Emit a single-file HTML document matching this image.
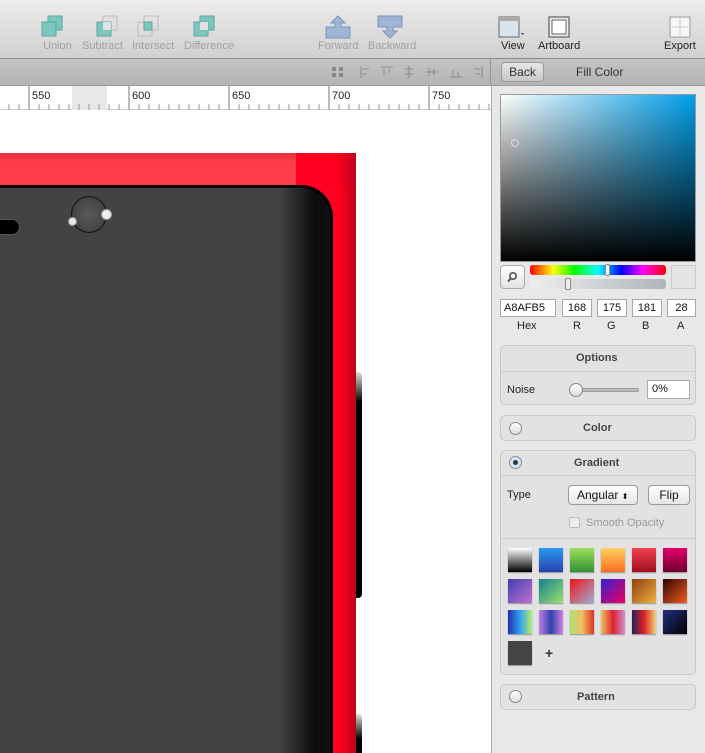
<!DOCTYPE html>
<html><head><meta charset="utf-8"><style>
*{margin:0;padding:0;box-sizing:border-box}
html,body{width:705px;height:753px;overflow:hidden}
body{position:relative;font-family:"Liberation Sans",sans-serif;background:#fff}
#w{position:absolute;left:0;top:0;width:705px;height:753px;overflow:hidden}
.a{position:absolute}
.tb{left:0;top:0;width:705px;height:59px;background:linear-gradient(#ececec,#d0d0d0);border-bottom:1px solid #8a8a8a}
.lbl{font-size:11px;color:#a0a0a0;top:40px}
.lbl2{font-size:11px;color:#222;top:40px}
.bar2{left:0;top:59px;width:705px;height:27px;background:linear-gradient(#c4c4c4,#b4b4b4);border-bottom:1px solid #999}
.ruler{left:0;top:86px;width:491px;height:24px;background:#fff;border-bottom:1px solid #ccc;font-size:11px;color:#222}
.panel{left:491px;top:86px;width:214px;height:667px;background:#e8e8e8;border-left:1px solid #aaa}
.box{background:#e2e2e2;border:1px solid #c8c8c8;border-radius:5px}
.in{background:#fff;border:1px solid #aaa;font-size:11px;color:#111;text-align:center;line-height:16px}
.sw{width:24px;height:24px;box-shadow:0 1px 1px rgba(0,0,0,.35)}
.rad{width:13px;height:13px;border-radius:50%;border:1px solid #888;background:linear-gradient(#fff,#ddd)}
.t{font-size:11px;color:#222}
.tb2{font-size:11px;font-weight:bold;color:#444}
</style></head><body><div id="w">
<div class="a tb"></div>
<svg class="a" style="left:40px;top:14px" width="200" height="28">
<rect x="8" y="2" width="14" height="14" fill="#7cc6bd" stroke="#5aa79e"/><rect x="2" y="8" width="14" height="14" fill="#7cc6bd" stroke="#5aa79e"/>
<rect x="63" y="2" width="14" height="14" fill="#e0e0e0" stroke="#bbb"/><rect x="57" y="8" width="14" height="14" fill="#7cc6bd" stroke="#5aa79e"/><rect x="63" y="8" width="8" height="8" fill="#e0e0e0"/>
<rect x="104" y="2" width="14" height="14" fill="none" stroke="#bbb"/><rect x="98" y="8" width="14" height="14" fill="none" stroke="#bbb"/><rect x="104" y="8" width="8" height="8" fill="#7cc6bd" stroke="#5aa79e"/>
<rect x="160" y="2" width="14" height="14" fill="#7cc6bd" stroke="#5aa79e"/><rect x="154" y="8" width="14" height="14" fill="#7cc6bd" stroke="#5aa79e"/><rect x="160" y="8" width="8" height="8" fill="#e0e0e0"/>
</svg>
<div class="a lbl" style="left:43px">Union</div>
<div class="a lbl" style="left:82px">Subtract</div>
<div class="a lbl" style="left:132px">Intersect</div>
<div class="a lbl" style="left:184px">Difference</div>
<svg class="a" style="left:322px;top:14px" width="90" height="26">
<path d="M16 2 L9 9 H13 V13 H4 V24 H28 V13 H19 V9 H23 Z" fill="#9fb5d6" stroke="#7a92b8"/>
<path d="M56 2 H80 V13 H71 V17 H75 L68 24 L61 17 H65 V13 H56 Z" fill="#9fb5d6" stroke="#7a92b8"/>
</svg>
<div class="a lbl" style="left:318px">Forward</div>
<div class="a lbl" style="left:368px">Backward</div>
<svg class="a" style="left:498px;top:15px" width="200" height="26">
<rect x="1" y="2" width="20" height="20" fill="#d8e4f0" stroke="#666"/><rect x="1" y="2" width="20" height="4" fill="#aaa"/><path d="M23 18 l3 0 l-1.5 2z" fill="#333"/>
<rect x="51" y="2" width="20" height="20" fill="#eee" stroke="#444"/><rect x="54" y="5" width="14" height="14" fill="#fff" stroke="#666"/>
<rect x="172" y="2" width="20" height="20" fill="#f6f6f6" stroke="#999"/><path d="M182 2 V22 M172 12 H192" stroke="#ccc"/>
</svg>
<div class="a lbl2" style="left:501px">View</div>
<div class="a lbl2" style="left:538px">Artboard</div>
<div class="a lbl2" style="left:664px">Export</div>
<div class="a bar2"></div>
<svg class="a" style="left:330px;top:64px" width="16" height="16" fill="#888"><rect x="2" y="3" width="4" height="4"/><rect x="9" y="3" width="4" height="4"/><rect x="2" y="9" width="4" height="4"/><rect x="9" y="9" width="4" height="4"/></svg>
<svg class="a" style="left:358px;top:64px" width="130" height="16" stroke="#8a8a8a" fill="#8a8a8a">
<path d="M3 2V14M5 5h6M5 10h4"/><path d="M23 3h12M26 5v6M31 5v4"/><path d="M51 2v12M47 5h8M47 10h8"/><path d="M68 8h12M71 4v8M76 5v6"/><path d="M92 13h12M95 6v6M100 8v4"/><path d="M124 2v12M116 5h6M118 10h4"/>
</svg>
<div class="a" style="left:490px;top:59px;width:1px;height:27px;background:#999"></div>
<div class="a" style="left:501px;top:62px;width:43px;height:20px;border:1px solid #999;border-radius:4px;background:linear-gradient(#e6e6e6,#c8c8c8);font-size:12px;color:#333;text-align:center;line-height:18px">Back</div>
<div class="a" style="left:576px;top:65px;font-size:12px;color:#333">Fill Color</div>
<div class="a ruler">
<div class="a" style="left:72px;top:0;width:35px;height:24px;background:#e8e8e8"></div>
<svg class="a" style="left:0;top:0" width="491" height="24">
<g stroke="#999">
<path d="M9 18v6M19 18v6M39 18v6M49 18v6M59 18v6M69 18v6M79 18v6M89 18v6M99 18v6M109 18v6M119 18v6M139 18v6M149 18v6M159 18v6M169 18v6M179 18v6M189 18v6M199 18v6M209 18v6M219 18v6M239 18v6M249 18v6M259 18v6M269 18v6M279 18v6M289 18v6M299 18v6M309 18v6M319 18v6M339 18v6M349 18v6M359 18v6M369 18v6M379 18v6M389 18v6M399 18v6M409 18v6M419 18v6M439 18v6M449 18v6M459 18v6M469 18v6M479 18v6M489 18v6"/>
<path d="M29 0v24M129 0v24M229 0v24M329 0v24M429 0v24" stroke="#777"/>
</g>
<g font-size="11" fill="#222" font-family="Liberation Sans"><text x="32" y="13">550</text><text x="132" y="13">600</text><text x="232" y="13">650</text><text x="332" y="13">700</text><text x="432" y="13">750</text></g>
</svg></div>
<div class="a" style="left:0;top:153px;width:356px;height:600px;background:linear-gradient(90deg,#ff0020 0,#ff0020 340px,#c00018 356px)"></div>
<div class="a" style="left:0;top:153px;width:296px;height:32px;background:linear-gradient(#e8303e,#ff3c4c 30%,#ff3c4c)"></div>
<div class="a" style="left:296px;top:153px;width:60px;height:32px;background:linear-gradient(90deg,#ff0020,#ff0020 40px,#c00018)"></div>
<div class="a" style="left:0;top:185px;width:333px;height:568px;border:3px solid #000;border-left:none;border-bottom:none;border-radius:0 32px 0 0;background:linear-gradient(90deg,#434343 0,#434343 280px,#2a2a2a 295px,#0c0c0c 315px,#111 330px)"></div>
<div class="a" style="left:0;top:219px;width:20px;height:16px;border-radius:0 8px 8px 0;background:#000;border:1px solid #555;border-left:none"></div>
<div class="a" style="left:71px;top:196px;width:36px;height:37px;border-radius:50%;background:radial-gradient(#5a5a5a,#3a3a3a);border:1px solid #111"></div>
<div class="a" style="left:68px;top:217px;width:9px;height:9px;border-radius:50%;background:#e8e8e8;border:1px solid #999"></div>
<div class="a" style="left:101px;top:209px;width:11px;height:11px;border-radius:50%;background:#eee;border:1px solid #999"></div>
<div class="a" style="left:356px;top:372px;width:6px;height:226px;border-radius:0 4px 4px 0;background:linear-gradient(#ddd,#000 30px,#000)"></div>
<div class="a" style="left:356px;top:714px;width:6px;height:39px;border-radius:0 4px 0 0;background:linear-gradient(#ddd,#000 25px)"></div>
<div class="a panel"></div>
<div class="a" style="left:500px;top:94px;width:196px;height:168px;border:1px solid #999;background:linear-gradient(transparent,#000),linear-gradient(90deg,#fff,#009ee8)"></div>
<div class="a" style="left:511px;top:139px;width:8px;height:8px;border-radius:50%;border:1.5px solid #ddd"></div>
<div class="a" style="left:500px;top:265px;width:25px;height:24px;border:1px solid #aaa;border-radius:4px;background:linear-gradient(#fff,#e4e4e4)"></div>
<svg class="a" style="left:506px;top:270px" width="14" height="14"><circle cx="7" cy="6" r="3.2" fill="none" stroke="#555" stroke-width="1.6"/><path d="M4.8 8.5 L2 11.5" stroke="#555" stroke-width="2"/></svg>
<div class="a" style="left:530px;top:265px;width:136px;height:10px;border-radius:3px;background:linear-gradient(90deg,#f00,#ff0 17%,#0f0 33%,#0ff 50%,#00f 67%,#f0f 83%,#f00)"></div>
<div class="a" style="left:605px;top:264px;width:5px;height:12px;background:#fff;border:1px solid #888;border-radius:2px"></div>
<div class="a" style="left:530px;top:279px;width:136px;height:10px;border-radius:3px;background:linear-gradient(90deg,#eee,#b0b5bb)"></div>
<div class="a" style="left:565px;top:278px;width:6px;height:12px;background:#eee;border:1px solid #888;border-radius:2px"></div>
<div class="a" style="left:671px;top:265px;width:25px;height:24px;border:1px solid #ccc;background:#e4e4e4"></div>
<div class="a in" style="left:500px;top:299px;width:56px;height:18px;text-align:left;padding-left:3px">A8AFB5</div>
<div class="a in" style="left:562px;top:299px;width:30px;height:18px">168</div>
<div class="a in" style="left:597px;top:299px;width:30px;height:18px">175</div>
<div class="a in" style="left:632px;top:299px;width:30px;height:18px">181</div>
<div class="a in" style="left:667px;top:299px;width:29px;height:18px">28</div>
<div class="a t" style="left:517px;top:320px">Hex</div>
<div class="a t" style="left:573px;top:320px">R</div>
<div class="a t" style="left:607px;top:320px">G</div>
<div class="a t" style="left:642px;top:320px">B</div>
<div class="a t" style="left:677px;top:320px">A</div>
<div class="a box" style="left:500px;top:345px;width:196px;height:60px"></div>
<div class="a" style="left:500px;top:371px;width:196px;height:1px;background:#ccc"></div>
<div class="a tb2" style="left:576px;top:352px">Options</div>
<div class="a t" style="left:507px;top:384px">Noise</div>
<div class="a" style="left:572px;top:388px;width:67px;height:4px;border-radius:2px;background:#bbb;border:1px solid #999"></div>
<div class="a" style="left:569px;top:383px;width:14px;height:14px;border-radius:50%;background:linear-gradient(#fff,#ddd);border:1px solid #888"></div>
<div class="a in" style="left:647px;top:380px;width:43px;height:19px;text-align:left;padding-left:4px">0%</div>
<div class="a box" style="left:500px;top:415px;width:196px;height:26px"></div>
<div class="a rad" style="left:509px;top:422px"></div>
<div class="a tb2" style="left:583px;top:422px">Color</div>
<div class="a box" style="left:500px;top:450px;width:196px;height:225px"></div>
<div class="a" style="left:500px;top:475px;width:196px;height:1px;background:#ccc"></div>
<div class="a" style="left:500px;top:538px;width:196px;height:1px;background:#ccc"></div>
<div class="a rad" style="left:509px;top:456px;background:radial-gradient(#333 2px,#cfe6ff 3px)"></div>
<div class="a tb2" style="left:574px;top:457px">Gradient</div>
<div class="a t" style="left:507px;top:489px">Type</div>
<div class="a" style="left:568px;top:485px;width:70px;height:20px;border:1px solid #999;border-radius:4px;background:linear-gradient(#fff,#e6e6e6);font-size:12px;line-height:18px;padding-left:8px;color:#111">Angular <span style="font-size:8px">⬍</span></div>
<div class="a" style="left:648px;top:485px;width:42px;height:20px;border:1px solid #999;border-radius:4px;background:linear-gradient(#fff,#e6e6e6);font-size:12px;line-height:18px;text-align:center;color:#111">Flip</div>
<div class="a" style="left:569px;top:517px;width:11px;height:11px;border:1px solid #bbb;border-radius:2px;background:#eee"></div>
<div class="a" style="left:586px;top:517px;font-size:11px;color:#999">Smooth Opacity</div>
<div class="a sw" style="left:508px;top:548px;background:linear-gradient(#fff,#000)"></div>
<div class="a sw" style="left:539px;top:548px;background:linear-gradient(#2a9af0,#2840b0)"></div>
<div class="a sw" style="left:570px;top:548px;background:linear-gradient(#a0e060,#309030)"></div>
<div class="a sw" style="left:601px;top:548px;background:linear-gradient(#ffd060,#ff7020)"></div>
<div class="a sw" style="left:632px;top:548px;background:linear-gradient(#f04050,#a01020)"></div>
<div class="a sw" style="left:663px;top:548px;background:linear-gradient(#e0006a,#700030)"></div>
<div class="a sw" style="left:508px;top:579px;background:linear-gradient(135deg,#4040b0,#c070d0)"></div>
<div class="a sw" style="left:539px;top:579px;background:linear-gradient(135deg,#108090,#a0e070)"></div>
<div class="a sw" style="left:570px;top:579px;background:linear-gradient(135deg,#f01020,#a0b0d0)"></div>
<div class="a sw" style="left:601px;top:579px;background:linear-gradient(135deg,#3020d0,#f00060)"></div>
<div class="a sw" style="left:632px;top:579px;background:linear-gradient(135deg,#904010,#f0b040)"></div>
<div class="a sw" style="left:663px;top:579px;background:linear-gradient(135deg,#300000,#f06020)"></div>
<div class="a sw" style="left:508px;top:610px;background:linear-gradient(90deg,#2030b0,#30a0f0,#b0f070)"></div>
<div class="a sw" style="left:539px;top:610px;background:linear-gradient(90deg,#c080e0,#3040b0,#d080e0)"></div>
<div class="a sw" style="left:570px;top:610px;background:linear-gradient(90deg,#b0e070,#f0c060,#e03020)"></div>
<div class="a sw" style="left:601px;top:610px;background:linear-gradient(90deg,#f0c060,#e02030,#d090d0)"></div>
<div class="a sw" style="left:632px;top:610px;background:linear-gradient(90deg,#202060,#e02020,#f0d080)"></div>
<div class="a sw" style="left:663px;top:610px;background:linear-gradient(135deg,#203080,#000)"></div>
<div class="a sw" style="left:508px;top:641px;background:#444"></div>
<div class="a" style="left:545px;top:645px;font-size:14px;font-weight:bold;color:#333">+</div>
<div class="a box" style="left:500px;top:684px;width:196px;height:26px"></div>
<div class="a rad" style="left:509px;top:690px"></div>
<div class="a tb2" style="left:577px;top:691px">Pattern</div>
</div></body></html>
